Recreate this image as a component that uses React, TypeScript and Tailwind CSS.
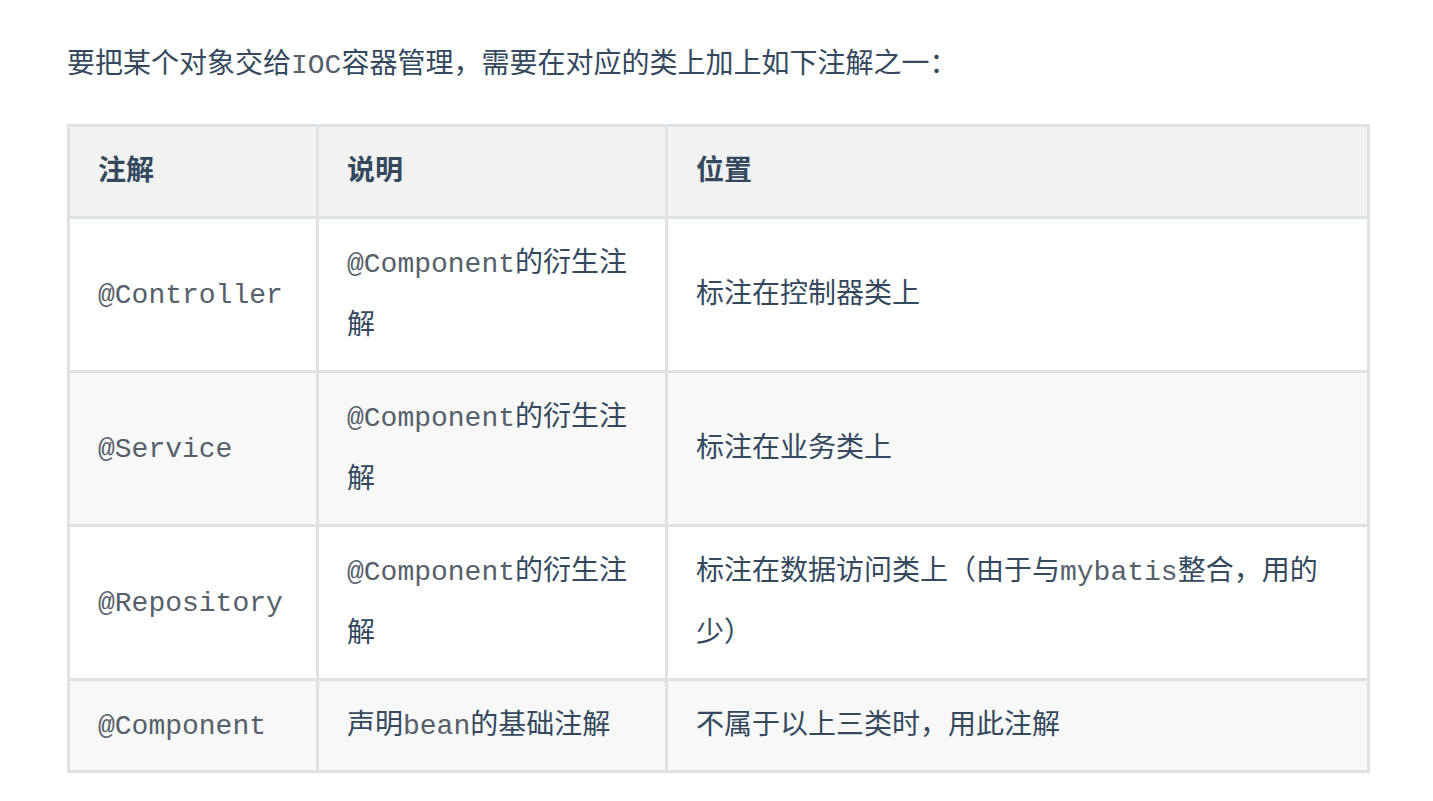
import React from 'react';

const rows = [
  {
    name: '@Controller',
    desc: [{ code: '@Component' }, { text: '的衍生注解' }],
    place: [{ text: '标注在控制器类上' }],
  },
  {
    name: '@Service',
    desc: [{ code: '@Component' }, { text: '的衍生注解' }],
    place: [{ text: '标注在业务类上' }],
  },
  {
    name: '@Repository',
    desc: [{ code: '@Component' }, { text: '的衍生注解' }],
    place: [
      { text: '标注在数据访问类上（由于与' },
      { code: 'mybatis' },
      { text: '整合，用的少）' },
    ],
  },
  {
    name: '@Component',
    desc: [{ text: '声明' }, { code: 'bean' }, { text: '的基础注解' }],
    place: [{ text: '不属于以上三类时，用此注解' }],
  },
];

type Part = { text?: string; code?: string };

const codeCls = "font-['Liberation_Mono',monospace] leading-none text-[#56606b]";
const cellCls = 'border-[3px] border-[#dfe2e5] px-[28px] pt-[10px] pb-[17px] text-left align-middle leading-[62px]';

function Rich({ parts }: { parts: Part[] }) {
  return (
    <>
      {parts.map((p, i) =>
        p.code ? (
          <code key={i} className={codeCls}>
            {p.code}
          </code>
        ) : (
          <span key={i}>{p.text}</span>
        )
      )}
    </>
  );
}

export default function App() {
  return (
    <div className="min-h-screen bg-white px-[67px] pt-[37px] text-[28px] text-[#34495e] font-['Noto_Sans_CJK_SC',sans-serif]">
      {/* Intro */}
      <p className="leading-[48px]">
        要把某个对象交给
        <code className={codeCls}>IOC</code>
        容器管理，需要在对应的类上加上如下注解之一：
      </p>

      {/* Table */}
      <table className="mt-[39px] w-[1303px] table-fixed border-collapse border-[3px] border-[#dfe2e5]">
        <colgroup>
          <col className="w-[249px]" />
          <col className="w-[349px]" />
          <col />
        </colgroup>
        <thead>
          <tr className="bg-[#f2f2f2]">
            <th className={cellCls + ' font-bold'}>注解</th>
            <th className={cellCls + ' font-bold'}>说明</th>
            <th className={cellCls + ' font-bold'}>位置</th>
          </tr>
        </thead>
        <tbody>
          {rows.map((r, i) => (
            <tr key={r.name} className={i % 2 === 1 ? 'bg-[#f8f8f8]' : 'bg-white'}>
              <td className={cellCls}>
                <code className={codeCls}>{r.name}</code>
              </td>
              <td className={cellCls}>
                <Rich parts={r.desc} />
              </td>
              <td className={cellCls}>
                <Rich parts={r.place} />
              </td>
            </tr>
          ))}
        </tbody>
      </table>
    </div>
  );
}
